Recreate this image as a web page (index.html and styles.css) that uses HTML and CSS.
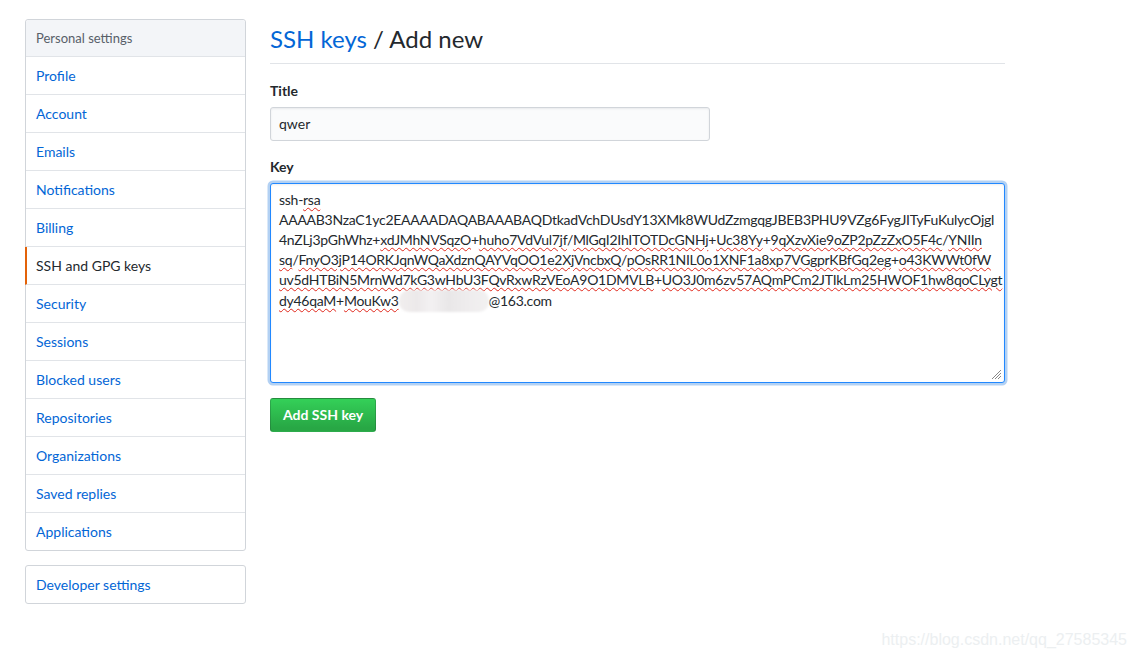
FILE: index.html
```html
<!DOCTYPE html>
<html lang="en">
<head>
<meta charset="utf-8">
<title>SSH keys / Add new</title>
<link rel="stylesheet" href="styles.css">
</head>
<body>
<div class="page">
  <aside class="sidebar">
    <nav class="menu">
      <div class="menu-heading">Personal settings</div>
      <a class="menu-item">Profile</a>
      <a class="menu-item">Account</a>
      <a class="menu-item">Emails</a>
      <a class="menu-item">Notifications</a>
      <a class="menu-item">Billing</a>
      <a class="menu-item selected">SSH and GPG keys</a>
      <a class="menu-item">Security</a>
      <a class="menu-item">Sessions</a>
      <a class="menu-item">Blocked users</a>
      <a class="menu-item">Repositories</a>
      <a class="menu-item">Organizations</a>
      <a class="menu-item">Saved replies</a>
      <a class="menu-item">Applications</a>
    </nav>
    <nav class="menu">
      <a class="menu-item">Developer settings</a>
    </nav>
  </aside>
  <main class="main">
    <div class="subhead">
      <h2 class="subhead-heading"><a class="link">SSH keys</a> / Add new</h2>
    </div>
    <form class="form">
      <div class="form-group">
        <label class="label">Title</label>
        <div class="input">qwer</div>
      </div>
      <div class="form-group">
        <label class="label">Key</label>
        <div class="textarea">
          <div class="line">ssh-<span class="sp">rsa</span></div>
          <div class="line">AAAAB3NzaC1yc2EAAAADAQABAAABAQDtkadVchDUsdY13XMk8WUdZzmgqgJBEB3PHU9VZg6FygJITyFuKulycOjgl</div>
          <div class="line">4nZLj3pGhWhz+<span class="sp">xdJMhNVSqzO</span>+<span class="sp">huho7VdVul7jf</span>/<span class="sp">MlGqI2IhITOTDcGNHj</span>+<span class="sp">Uc38Yy</span>+<span class="sp">9qXzvXie9oZP2pZzZxO5F4c</span>/<span class="sp">YNIIn</span></div>
          <div class="line"><span class="sp">sq</span>/<span class="sp">FnyO3jP14ORKJqnWQaXdznQAYVqOO1e2XjVncbxQ</span>/<span class="sp">pOsRR1NIL0o1XNF1a8xp7VGgprKBfGq2eg</span>+<span class="sp">o43KWWt0fW</span></div>
          <div class="line"><span class="sp">uv5dHTBiN5MrnWd7kG3wHbU3FQvRxwRzVEoA9O1DMVLB</span>+<span class="sp">UO3J0m6zv57AQmPCm2JTIkLm25HWOF1hw8qoCLygt</span></div>
          <div class="line"><span class="sp">dy46qaM</span>+<span class="sp">MouKw3</span><span class="blur"></span>@163.com</div>
          <svg class="grip" width="10" height="10" viewBox="0 0 10 10"><path d="M9 3 L3 9 M9 6 L6 9 M9 0 L0 9" stroke="#888" stroke-width="1" fill="none"/></svg>
        </div>
      </div>
      <div class="form-actions">
        <button type="button" class="btn">Add SSH key</button>
      </div>
    </form>
  </main>
</div>
<div class="watermark">https://blog.csdn.net/qq_27585345</div>
</body>
</html>
```
FILE: styles.css
```css
html, body {
  margin: 0;
  padding: 0;
  background: #fff;
}
body {
  font-family: Lato, "Liberation Sans", Arial, sans-serif;
  font-size: 14px;
  line-height: 1.5;
  color: #24292e;
}
.page {
  display: flex;
  gap: 24px;
  padding: 19px 0 0 25px;
}
.sidebar {
  width: 221px;
  flex: none;
  display: flex;
  flex-direction: column;
  gap: 14px;
}
.menu {
  display: flex;
  flex-direction: column;
  border: 1px solid #d1d5da;
  border-radius: 3px;
  background: #fff;
}
.menu-heading {
  padding: 8px 10px;
  line-height: 20px;
  font-size: 13px;
  color: #586069;
  background: #f3f5f8;
  border-bottom: 1px solid #e1e4e8;
  border-radius: 3px 3px 0 0;
}
.menu-item {
  display: block;
  padding: 8px 10px;
  line-height: 21px;
  color: #0366d6;
  border-bottom: 1px solid #e1e4e8;
  text-decoration: none;
}
.menu-item:last-child {
  border-bottom: 0;
}
.menu-item.selected {
  color: #24292e;
  border-left: 2px solid #e36209;
  margin-left: -1px;
  padding-left: 9px;
}
.main {
  width: 735px;
  flex: none;
}
.subhead {
  padding-bottom: 8px;
  border-bottom: 1px solid #e1e4e8;
  margin-bottom: 16px;
}
.subhead-heading {
  margin: 0;
  padding-top: 3px;
  font-size: 24px;
  font-weight: 400;
  line-height: 33px;
}
.link {
  color: #0366d6;
}
.form-group {
  margin-bottom: 15px;
}
.label {
  display: block;
  font-weight: 700;
  line-height: 21px;
  margin-bottom: 6px;
}
.input {
  width: 440px;
  box-sizing: border-box;
  height: 34px;
  padding: 6px 8px;
  line-height: 20px;
  background: #fafbfc;
  border: 1px solid #d1d5da;
  border-radius: 3px;
  box-shadow: inset 0 1px 2px rgba(27,31,35,.075);
}
.textarea {
  position: relative;
  box-sizing: border-box;
  width: 735px;
  height: 200px;
  padding: 6px 8px;
  line-height: 20px;
  background: #fff;
  border: 1px solid #2188ff;
  border-radius: 3px;
  box-shadow: inset 0 1px 2px rgba(27,31,35,.075), 0 0 0 2.5px rgba(3,102,214,.3);
  overflow: hidden;
}
.line {
  white-space: nowrap;
  letter-spacing: -0.27px;
}
.sp {
  text-decoration: underline wavy #e0261a;
  text-decoration-thickness: 1px;
  text-underline-offset: 2px;
}
.blur {
  display: inline-block;
  vertical-align: -6px;
  width: 90px;
  height: 22px;
  border-radius: 10px;
  background: linear-gradient(90deg, #f1eeee 0, #ece9ea 20%, #f3f1f2 35%, #e9e7e8 55%, #eeeced 75%, #f2f1f1 100%);
  filter: blur(1px);
}
.grip {
  position: absolute;
  right: 2px;
  bottom: 2px;
}
.btn {
  font-family: inherit;
  font-size: 14px;
  font-weight: 700;
  line-height: 20px;
  color: #fff;
  padding: 6px 12px;
  border: 1px solid rgba(27,31,35,.2);
  border-radius: 3px;
  background: linear-gradient(-180deg, #34d058 0%, #28a745 90%);
  cursor: pointer;
}
.watermark {
  position: absolute;
  right: 10px;
  bottom: 8px;
  font-size: 16px;
  color: #eceff1;
  font-family: "Liberation Sans", Arial, sans-serif;
}
```
